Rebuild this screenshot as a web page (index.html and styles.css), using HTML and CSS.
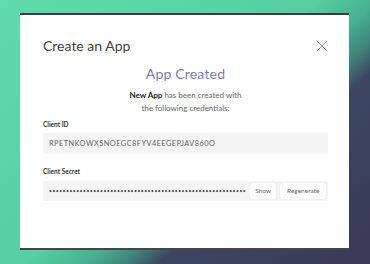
FILE: index.html
```html
<!DOCTYPE html>
<html>
<head>
<meta charset="utf-8">
<link rel="stylesheet" href="styles.css">
</head>
<body>
<div class="modal">
  <div class="header">
    <div class="title">Create an App</div>
    <svg class="close" width="12" height="12" viewBox="0 0 12 12"><path d="M1 1 L11 11 M11 1 L1 11" stroke="#9a9a9a" stroke-width="1" fill="none"/></svg>
  </div>
  <div class="created">App Created</div>
  <div class="desc"><b>New App</b> has been created with<br>the following credentials:</div>
  <div class="label">Client ID</div>
  <div class="field">RPETNKOWXSNOEGC8FYV4EEGEPJAV860O</div>
  <div class="label label2">Client Secret</div>
  <div class="field secret">
    <span class="dots">••••••••••••••••••••••••••••••••••••••••••••••••••••••••••</span>
    <span class="btn show">Show</span>
    <span class="btn regen">Regenerate</span>
  </div>
</div>
</body>
</html>
```

FILE: styles.css
```css
html, body {
  margin: 0;
  padding: 0;
}
body {
  width: 370px;
  height: 264px;
  overflow: hidden;
  background: linear-gradient(138deg, #5fdcab 0%, #55cfa3 48%, #48b08f 57%, #3f837b 63%, #3b4661 68%, #3a3957 100%);
  font-family: Lato, "Open Sans", sans-serif;
  padding-top: 13px;
  box-sizing: border-box;
}
.modal {
  margin-left: 20px;
  width: 329px;
  height: 235px;
  background: #fff;
  border-top: 2px solid #3c3c40;
  box-shadow: 0 2px 0 #45454c;
  box-sizing: border-box;
  padding: 22px 21px 0 23px;
}
.header {
  display: flex;
  justify-content: space-between;
  align-items: center;
  height: 18px;
}
.title {
  font-size: 14px;
  color: #444;
  line-height: 18px;
}
.created {
  margin-top: 11px;
  text-align: center;
  font-size: 14px;
  line-height: 16px;
  color: #8279c6;
  letter-spacing: 0.2px;
}
.desc {
  margin-top: 7px;
  text-align: center;
  font-size: 8px;
  line-height: 13px;
  color: #666;
}
.desc b {
  color: #222;
  font-weight: 700;
}
.label {
  margin-top: 5px;
  font-size: 6.5px;
  font-weight: 700;
  color: #333;
  line-height: 10px;
}
.label2 {
  margin-top: 13px;
}
.field {
  margin-top: 3px;
  height: 21px;
  background: #f4f4f4;
  border-radius: 2px;
  box-sizing: border-box;
  padding-left: 6px;
  font-size: 7.4px;
  line-height: 21px;
  color: #666;
  letter-spacing: 0.45px;
}
.secret {
  display: flex;
  align-items: center;
  height: 20px;
  margin-top: 4px;
  padding-right: 2px;
  letter-spacing: 0;
}
.dots {
  flex: none;
  margin-right: auto;
  font-size: 5px;
  letter-spacing: 0.5px;
  color: #4a4a4a;
  white-space: nowrap;
}
.btn {
  flex: none;
  background: #fff;
  height: 16px;
  line-height: 16px;
  font-size: 6.5px;
  color: #666;
  text-align: center;
  border-radius: 2px;
  box-shadow: 0 0 1px rgba(0,0,0,0.15);
  margin-left: 4px;
}
.show {
  width: 26px;
}
.regen {
  width: 46px;
}
```
